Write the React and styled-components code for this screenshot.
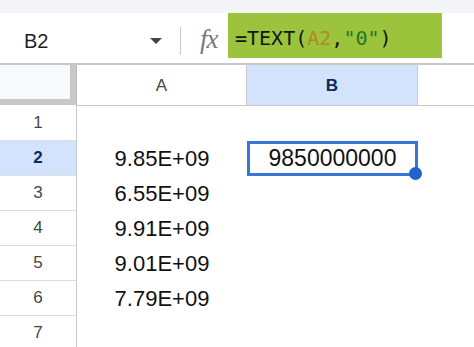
import styled, { createGlobalStyle } from 'styled-components'

const GlobalStyle = createGlobalStyle`
  html, body {
    margin: 0;
    padding: 0;
    background: #fff;
  }
  body {
    font-family: "Liberation Sans", Arial, sans-serif;
    overflow: hidden;
  }
`

const Page = styled.div`
  width: 474px;
  height: 347px;
  overflow: hidden;
  background: #fff;
`

const TopStrip = styled.div`
  height: 13px;
  background: #f3f5f8;
`

const FormulaBar = styled.div`
  display: flex;
  align-items: flex-start;
  height: 50px;
  border-bottom: 2px solid #c8c8c8;
`

const NameBox = styled.div`
  display: flex;
  align-items: center;
  justify-content: space-between;
  width: 162px;
  height: 50px;
  padding: 6px 0 0 24px;
  box-sizing: border-box;
  font-size: 20px;
  color: #1f1f1f;
`

const Caret = styled.span`
  width: 0;
  height: 0;
  border-left: 6px solid transparent;
  border-right: 6px solid transparent;
  border-top: 6px solid #444;
`

const Divider = styled.div`
  width: 1px;
  height: 28px;
  margin: 14px 0 0 18px;
  background: #c8c8c8;
`

const Fx = styled.span`
  width: 28px;
  margin: 11px 0 0 19px;
  font-family: "Liberation Serif", "Times New Roman", serif;
  font-style: italic;
  font-size: 27px;
  color: #7a7a7a;
  letter-spacing: -1px;
`

const FormulaBox = styled.div`
  display: flex;
  align-items: center;
  width: 214px;
  height: 45px;
  padding: 5px 0 0 7px;
  box-sizing: border-box;
  background: #9bc33c;
  font-family: "DejaVu Sans Mono", "Liberation Mono", monospace;
  font-size: 20px;
  color: #141414;
  white-space: pre;
`

const Token = styled.span`
  color: ${p => p.$color};
`

const HeaderRow = styled.div`
  display: flex;
  height: 41px;
`

const Corner = styled.div`
  position: relative;
  flex: none;
  width: 77px;
  height: 40px;
  box-sizing: border-box;
  background: #f8f9fa;
  border-right: 7px solid #c8c8c8;
  border-bottom: 6px solid #c8c8c8;

  &::after {
    content: '';
    position: absolute;
    right: -7px;
    top: 0;
    bottom: -7px;
    width: 1px;
    background: #bdbdbd;
  }
`

const ColHeader = styled.div`
  display: flex;
  align-items: center;
  justify-content: center;
  flex: none;
  width: ${p => p.$width}px;
  height: 41px;
  box-sizing: border-box;
  border-bottom: 1px solid #c8c8c8;
  border-right: ${p => (p.$last ? 'none' : '1px solid #c8c8c8')};
  background: ${p => (p.$active ? '#d3e3fd' : '#fff')};
  color: ${p => (p.$active ? '#0b2a5b' : '#444746')};
  font-weight: ${p => (p.$active ? 700 : 400)};
  font-size: 17px;
  padding-top: 2px;
`

const Row = styled.div`
  display: flex;
  height: 35px;
`

const RowHeader = styled.div`
  display: flex;
  align-items: center;
  justify-content: center;
  flex: none;
  width: 77px;
  height: 35px;
  box-sizing: border-box;
  border-right: 1px solid #c8c8c8;
  border-bottom: 1px solid #dadce0;
  background: ${p => (p.$active ? '#d3e3fd' : '#fff')};
  color: ${p => (p.$active ? '#0b2a5b' : '#444746')};
  font-weight: ${p => (p.$active ? 700 : 400)};
  font-size: 17px;
`

const Cell = styled.div`
  position: relative;
  display: flex;
  align-items: center;
  justify-content: center;
  flex: none;
  width: ${p => p.$width}px;
  height: 35px;
  font-size: ${p => p.$size || 22}px;
  color: #111;
`

const Selection = styled.div`
  position: absolute;
  left: 0;
  top: 0;
  right: 0;
  bottom: 0;
  border: 3px solid #3a74d7;
  pointer-events: none;
`

const Handle = styled.div`
  position: absolute;
  right: -7px;
  bottom: -7px;
  width: 13px;
  height: 13px;
  border-radius: 50%;
  background: #2361cf;
`

const data = [
  { n: 1, a: '', b: '' },
  { n: 2, a: '9.85E+09', b: '9850000000', active: true },
  { n: 3, a: '6.55E+09', b: '' },
  { n: 4, a: '9.91E+09', b: '' },
  { n: 5, a: '9.01E+09', b: '' },
  { n: 6, a: '7.79E+09', b: '' },
  { n: 7, a: '', b: '' },
]

export default function App() {
  return (
    <Page>
      <GlobalStyle />
      <TopStrip />
      <FormulaBar>
        <NameBox>
          B2
          <Caret />
        </NameBox>
        <Divider />
        <Fx>fx</Fx>
        <FormulaBox>
          =TEXT(<Token $color="#b08a1f">A2</Token>,<Token $color="#1d7a22">"0"</Token>)
        </FormulaBox>
      </FormulaBar>
      <HeaderRow>
        <Corner />
        <ColHeader $width={170}>A</ColHeader>
        <ColHeader $width={171} $active>B</ColHeader>
        <ColHeader $width={56} $last />
      </HeaderRow>
      {data.map(r => (
        <Row key={r.n}>
          <RowHeader $active={r.active}>{r.n}</RowHeader>
          <Cell $width={170}>{r.a}</Cell>
          <Cell $width={171} $size={23}>
            {r.b}
            {r.active && (
              <Selection>
                <Handle />
              </Selection>
            )}
          </Cell>
        </Row>
      ))}
    </Page>
  )
}
